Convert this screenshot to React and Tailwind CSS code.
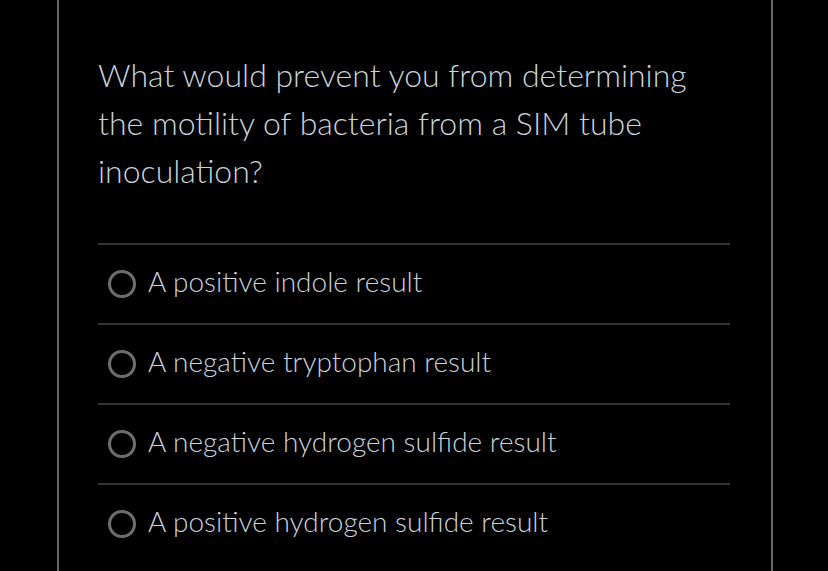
import React from "react";

const options = [
  "A positive indole result",
  "A negative tryptophan result",
  "A negative hydrogen sulfide result",
  "A positive hydrogen sulfide result",
];

export default function App() {
  return (
    <div className="w-[828px] h-[571px] bg-black overflow-hidden font-['Lato',sans-serif]">
      <div className="ml-[57px] w-[716px] h-full border-x-2 border-[#666666] pl-[39px] pr-[41px] pt-[51px]">
        <h1 className="text-[32px] leading-[48px] text-[#c9d2dc] font-light">
          What would prevent you from determining the motility of bacteria from a SIM tube inoculation?
        </h1>

        <div className="mt-[48px]">
          {options.map((opt) => (
            <label
              key={opt}
              className="flex items-center h-[80px] border-t-2 border-[#333333] pl-[10px] pb-[7px]"
            >
              <span className="w-[28px] h-[28px] rounded-full border-[3px] border-[#6e6e6e] shrink-0 mt-[6px]" />
              <span className="ml-[12px] text-[28px] text-[#c9d2dc] font-light">{opt}</span>
            </label>
          ))}
        </div>
      </div>
    </div>
  );
}
